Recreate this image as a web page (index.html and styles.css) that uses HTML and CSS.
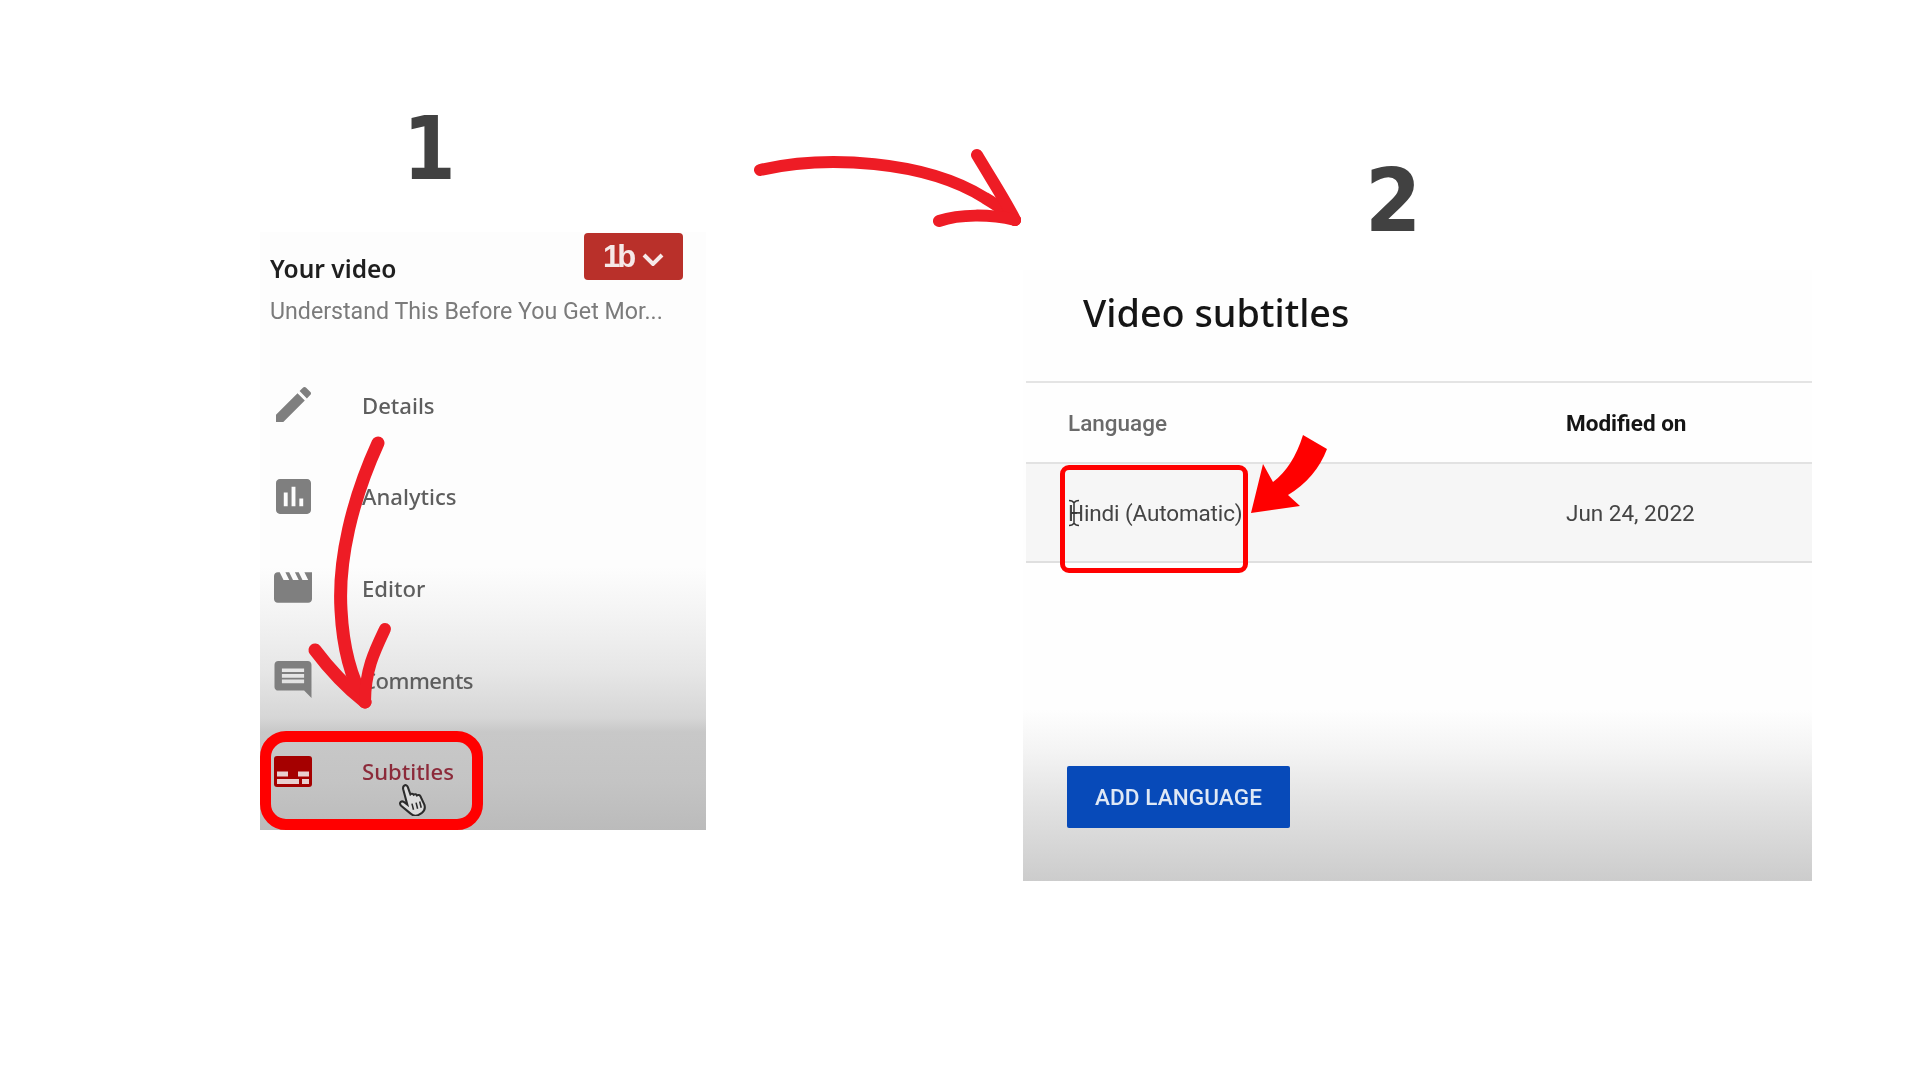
FILE: index.html
```html
<!DOCTYPE html>
<html lang="en">
<head>
<meta charset="utf-8">
<title>Video subtitles steps</title>
<link rel="stylesheet" href="styles.css">
</head>
<body>
<main class="canvas">
  <div class="step step-one">1</div>
  <div class="step step-two">2</div>

  <section class="panel-left">
    <div class="pl-content">
      <header class="pl-head">
        <div class="pl-title-row">
          <h2 class="pl-title">Your video</h2>
          <div class="tb-badge">
            <span class="tb-logo">1b</span>
            <svg class="tb-chev" viewBox="0 0 22 14"><path d="M2 3l9 9 9-9"/></svg>
          </div>
        </div>
        <p class="pl-sub">Understand This Before You Get Mor...</p>
      </header>
      <nav class="pl-nav">
        <div class="nav-row">
          <span class="nav-icon"><svg class="ic-35" viewBox="3 3 18 18"><path d="M3 17.25V21h3.75L17.81 9.94l-3.75-3.75L3 17.25zM20.71 7.04c.39-.39.39-1.02 0-1.41l-2.34-2.34c-.39-.39-1.02-.39-1.41 0l-1.83 1.83 3.75 3.75 1.83-1.83z"/></svg></span>
          <span class="nav-label">Details</span>
        </div>
        <div class="nav-row">
          <span class="nav-icon"><svg class="ic-35" viewBox="3 3 18 18"><path d="M19 3H5c-1.1 0-2 .9-2 2v14c0 1.1.9 2 2 2h14c1.1 0 2-.9 2-2V5c0-1.1-.9-2-2-2zM9 17H7v-7h2v7zm4 0h-2V7h2v10zm4 0h-2v-4h2v4z"/></svg></span>
          <span class="nav-label">Analytics</span>
        </div>
        <div class="nav-row">
          <span class="nav-icon"><svg class="ic-movie" viewBox="2 4 20 16"><path d="M18 4l2 4h-3l-2-4h-2l2 4h-3l-2-4H8l2 4H7L5 4H4c-1.1 0-1.99.9-1.99 2L2 18c0 1.1.9 2 2 2h16c1.1 0 2-.9 2-2V4h-4z"/></svg></span>
          <span class="nav-label">Editor</span>
        </div>
        <div class="nav-row">
          <span class="nav-icon"><svg class="ic-comment" viewBox="2 2 20 20"><path d="M21.99 4c0-1.1-.89-2-1.99-2H4c-1.1 0-2 .9-2 2v12c0 1.1.9 2 2 2h14l4 4-.01-18zM18 14H6v-2h12v2zm0-3H6V9h12v2zm0-3H6V6h12v2z"/></svg></span>
          <span class="nav-label nav-comments">Comments</span>
        </div>
        <div class="nav-row nav-active">
          <span class="nav-icon"><svg class="ic-subs" viewBox="0 0 38 31"><rect class="subs-bg" width="38" height="31" rx="3"/><path class="subs-bar" d="M3 15.500h11v5H3zM24 15.500h11v5H24zM3 23h22v5H3zM28 23h7v5h-7z"/></svg></span>
          <span class="nav-label">Subtitles</span>
        </div>
      </nav>
      <svg class="hand" viewBox="0 0 30 32"><path d="M6 2.500c1.500-1 3 0 3.500 1.500l2.500 7c1-1 2.500-.8 3.200.4 1-.9 2.600-.6 3.200.7 1-.8 2.600-.5 3.300.8l3.800 8c1 3 .2 6-2.300 8l-3.200 2c-2.500 1.200-5.500.8-7.500-1L3 22c-1.200-1.200-1.500-3-.3-3.800 1.200-.8 2.800-.2 4 1L9 21 5 6c-.3-1.400 0-2.800 1-3.500z"/><path class="hand-lines" d="M13.500 20l1.500 6M17.500 19l1.500 6M21 18l1.500 6"/></svg>
    </div>
    <div class="ring-left"></div>
  </section>

  <section class="panel-right">
    <div class="pr-content">
      <div class="pr-titlebar"><h1 class="pr-title">Video subtitles</h1></div>
      <div class="pr-table">
        <div class="pr-row pr-head">
          <span class="pr-lang">Language</span>
          <span class="pr-mod">Modified on</span>
        </div>
        <div class="pr-row pr-item">
          <span class="pr-hindi">Hindi (Automatic)</span>
          <span>Jun 24, 2022</span>
        </div>
      </div>
      <div class="pr-foot">
        <div class="pr-btn">ADD LANGUAGE</div>
      </div>
      <svg class="ibeam" viewBox="0 0 12 28"><path d="M1 1.500c2 0 4 .5 5 2.500 1-2 3-2.500 5-2.500M6 4v20M1 26.500c2 0 4-.5 5-2.500 1 2 3 2.500 5 2.500M3 14h6"/></svg>
    </div>
    <div class="ring-right"></div>
  </section>

  <svg class="arrows" viewBox="0 0 1920 1080">
    <g class="arrow-stroke">
      <path class="w12" d="M760 170C825 155 925 160 985 198C1000 207 1010 214 1015 220"/>
      <path class="w12" d="M977 155C995 185 1008 205 1015 220"/>
      <path class="w12" d="M939 221C960 214 990 214 1015 220"/>
      <path class="w13" d="M378 443C352 500 338 560 341 610C343 650 352 680 365 702"/>
      <path class="w13" d="M315 650C330 670 350 690 365 702"/>
      <path class="w12" d="M385 629C375 650 365 670 365 702"/>
    </g>
    <path class="arrow-solid" d="M1303 435L1327 449Q1316 478 1288 495L1300 506L1251 513L1263 464L1273 482Q1293 467 1303 435Z"/>
  </svg>
</main>
</body>
</html>
```
FILE: styles.css
```css
* { box-sizing: border-box; }
html, body { margin: 0; padding: 0; background: #fff; }
.canvas { position: relative; width: 1920px; height: 1080px; overflow: hidden; background: #fff; }

.step { position: absolute; color: #414141; font-weight: 700; font-family: "DejaVu Sans", sans-serif; font-size: 88px; line-height: 88px; }
.step-one { left: 403px; top: 105px; transform: scaleX(.86); transform-origin: 0 50%; }
.step-two { left: 1365px; top: 157px; transform: scaleX(.92); transform-origin: 0 50%; }

.panel-left { position: absolute; left: 260px; top: 232px; width: 446px; height: 598px;
  background: linear-gradient(180deg, #fdfdfd 0, #fdfdfd 335px, #f3f3f3 385px, #e6e6e6 440px, #d6d6d6 486px, #c8c8c8 500px, #c4c4c4 550px, #bbbbbb 598px); }
.pl-content { position: relative; height: 100%; filter: blur(.45px); }
.pl-head { padding: 1px 23px 0 10px; height: 127px; }
.pl-title-row { display: flex; justify-content: space-between; align-items: flex-start; height: 60px; }
.pl-title { margin: 18px 0 0; font: 600 24.500px/36px "Noto Sans", sans-serif; color: #1f1f1f; }
.tb-badge { display: flex; align-items: center; justify-content: center; gap: 6px; width: 99px; height: 47px; background: #b9302a; border-radius: 4px; }
.tb-logo { color: #f6e9e8; font: 700 31px/40px "Liberation Sans", sans-serif; letter-spacing: -3px; margin-right: 3px; }
.tb-chev { width: 22px; height: 14px; margin-top: 5px; fill: none; stroke: #f6e9e8; stroke-width: 4; }
.pl-sub { margin: 2px 0 0; font: 400 23.200px/32px Roboto, sans-serif; color: #7b7b7b; white-space: nowrap; }
.pl-nav { display: flex; flex-direction: column; padding-left: 14px; }
.nav-row { display: flex; align-items: center; gap: 50px; height: 91.600px; }
.nav-icon { display: flex; justify-content: center; align-items: center; width: 38px; flex: none; }
.nav-icon svg { display: block; fill: #7f7f7f; }
.ic-35 { width: 35px; height: 35px; }
.ic-movie { width: 38px; height: 31px; }
.ic-comment { width: 38px; height: 37px; }
.ic-subs { width: 38px; height: 31px; }
.nav-label { font: 500 22.100px/30px "Noto Sans", sans-serif; color: #5e5e5e; }
.nav-comments { letter-spacing: -.5px; }
.nav-active .nav-label { color: #8c2a3a; }
.nav-icon .subs-bg { fill: #a50000; }
.nav-icon .subs-bar { fill: #e9cfcf; }
.hand { position: absolute; left: 138px; top: 551px; width: 31px; height: 33px; fill: #dcdcdc; stroke: #2c2c2c; stroke-width: 2; }
.hand-lines { fill: none; stroke-width: 1.500; }
.ring-left { position: absolute; left: 0; top: 499px; width: 223px; height: 99px; border: 11px solid #ff0000; border-radius: 26px; }

.panel-right { position: absolute; left: 1023px; top: 270px; width: 789px; height: 611px;
  background: linear-gradient(180deg, #fefefe 0, #fefefe 440px, #f4f4f4 480px, #e2e2e2 535px, #cccccc 611px); }
.pr-content { position: relative; display: flex; flex-direction: column; height: 100%; filter: blur(.4px); }
.pr-titlebar { height: 113px; margin-left: 3px; padding: 17px 0 0 57px; border-bottom: 2px solid #e4e4e4; }
.pr-title { margin: 0; font: 500 37.800px/52px "Noto Sans", sans-serif; color: #151515; }
.pr-table { margin-left: 3px; }
.pr-row { display: grid; grid-template-columns: 498px 1fr; padding-left: 42px; align-items: center; font: 400 22.500px/30px Roboto, sans-serif; color: #444; }
.pr-head { height: 81px; border-bottom: 2px solid #e2e2e2; }
.pr-lang { font-weight: 500; color: #6a6a6a; }
.pr-mod { font-weight: 700; color: #151515; }
.pr-item { height: 99px; background: #f6f6f6; border-bottom: 2px solid #dfdfdf; }
.pr-hindi { letter-spacing: -.13px; }
.pr-foot { padding: 203px 0 0 44px; }
.pr-btn { display: flex; align-items: center; justify-content: center; width: 223px; height: 62px; background: #074ab9; border-radius: 2px; color: #dfe8f5; font: 500 22.500px/30px Roboto, sans-serif; letter-spacing: .1px; }
.ibeam { position: absolute; left: 45px; top: 229px; width: 12px; height: 28px; fill: none; stroke: #333; stroke-width: 1.500; }
.ring-right { position: absolute; left: 37px; top: 195px; width: 188px; height: 108px; border: 5px solid #ff0000; border-radius: 9px; }

.arrows { position: absolute; left: 0; top: 0; width: 1920px; height: 1080px; }
.arrow-stroke { fill: none; stroke: #ee1c25; stroke-linecap: round; stroke-linejoin: round; }
.w12 { stroke-width: 12; }
.w13 { stroke-width: 13; }
.arrow-solid { fill: #ff0000; }
```
